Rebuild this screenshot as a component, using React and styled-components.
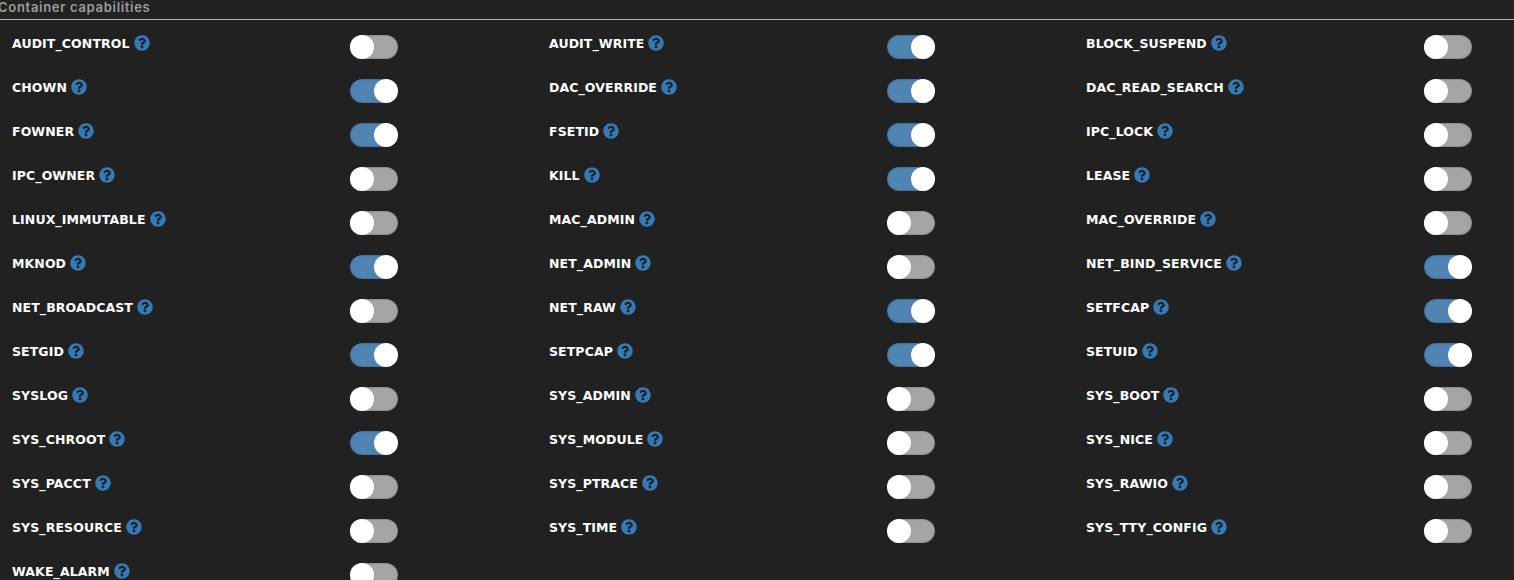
import styled, { createGlobalStyle } from 'styled-components';
import { FaQuestionCircle } from 'react-icons/fa';

const GlobalStyle = createGlobalStyle`
  html, body {
    margin: 0;
    padding: 0;
    background: #212121;
    overflow: hidden;
  }
`;

const Page = styled.div`
  width: 1514px;
  height: 580px;
  overflow: hidden;
  background: #212121;
  font-family: 'Inter', 'Liberation Sans', sans-serif;
`;

const Legend = styled.div`
  height: 19px;
  margin-left: -2px;
  font-size: 13px;
  font-weight: 600;
  line-height: 15px;
  letter-spacing: 0.7px;
  color: #9d9d9d;
  white-space: nowrap;
`;

const Rule = styled.div`
  height: 1px;
  background: #b3b3b3;
  margin-bottom: 15px;
`;

const Grid = styled.div`
  display: grid;
  grid-template-columns: repeat(3, 537px);
  grid-auto-rows: 44px;
  padding-left: 12px;
`;

const Cell = styled.div`
  display: flex;
  align-items: flex-start;
`;

const Label = styled.div`
  display: flex;
  align-items: center;
  gap: 4px;
  width: 338px;
  height: 16px;
  font-family: 'DejaVu Sans', 'Liberation Sans', sans-serif;
  font-size: 12.5px;
  font-weight: 700;
  letter-spacing: 0.1px;
  color: #fff;
  white-space: nowrap;
`;

const Help = styled(FaQuestionCircle)`
  width: 16px;
  height: 16px;
  color: #337ab7;
`;

const Track = styled.div`
  display: flex;
  justify-content: ${props => (props.$on ? 'flex-end' : 'flex-start')};
  width: 48px;
  height: 24px;
  border-radius: 12px;
  background: ${props => (props.$on ? '#4f84b3' : '#a5a5a5')};
  box-shadow: inset 0 0 2px rgba(0, 0, 0, 0.45);
`;

const Knob = styled.div`
  width: 24px;
  height: 24px;
  border-radius: 50%;
  background: #fff;
`;

const capabilities = [
  ['AUDIT_CONTROL', false], ['AUDIT_WRITE', true], ['BLOCK_SUSPEND', false],
  ['CHOWN', true], ['DAC_OVERRIDE', true], ['DAC_READ_SEARCH', false],
  ['FOWNER', true], ['FSETID', true], ['IPC_LOCK', false],
  ['IPC_OWNER', false], ['KILL', true], ['LEASE', false],
  ['LINUX_IMMUTABLE', false], ['MAC_ADMIN', false], ['MAC_OVERRIDE', false],
  ['MKNOD', true], ['NET_ADMIN', false], ['NET_BIND_SERVICE', true],
  ['NET_BROADCAST', false], ['NET_RAW', true], ['SETFCAP', true],
  ['SETGID', true], ['SETPCAP', true], ['SETUID', true],
  ['SYSLOG', false], ['SYS_ADMIN', false], ['SYS_BOOT', false],
  ['SYS_CHROOT', true], ['SYS_MODULE', false], ['SYS_NICE', false],
  ['SYS_PACCT', false], ['SYS_PTRACE', false], ['SYS_RAWIO', false],
  ['SYS_RESOURCE', false], ['SYS_TIME', false], ['SYS_TTY_CONFIG', false],
  ['WAKE_ALARM', false],
];

const App = () => (
  <>
    <GlobalStyle />
    <Page>
      <Legend>Container capabilities</Legend>
      <Rule />
      <Grid>
        {capabilities.map(([name, on]) => (
          <Cell key={name}>
            <Label>
              {name}
              <Help />
            </Label>
            <Track $on={on}>
              <Knob />
            </Track>
          </Cell>
        ))}
      </Grid>
    </Page>
  </>
);

export default App;
